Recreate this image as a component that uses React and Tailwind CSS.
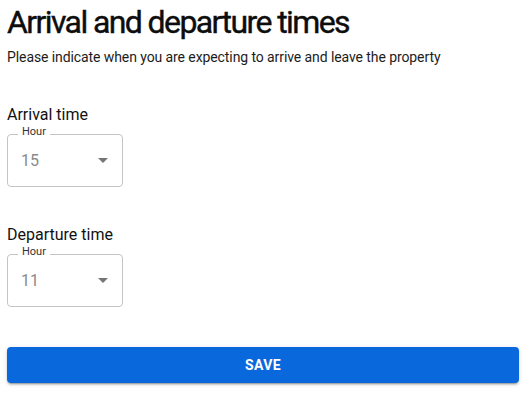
import React from "react";

function HourSelect({ value }) {
  return (
    <div className="relative mt-[7px] flex h-[53px] w-[116px] items-center rounded-[4px] border border-[#c4c4c4] pl-[13px]">
      <span className="absolute left-[10px] top-[-9px] bg-white px-[4px] text-[11px] leading-[12px] text-[#333]">
        Hour
      </span>
      <span className="text-[16px] leading-[24px] text-[#8a8a8a]">{value}</span>
      <svg
        className="absolute right-[7px] top-[13px]"
        width="24"
        height="24"
        viewBox="0 0 24 24"
        fill="#757575"
      >
        <path d="M7 10l5 5 5-5z" />
      </svg>
    </div>
  );
}

export default function App() {
  return (
    <div
      className="min-h-[406px] bg-white px-[7px] text-[#111]"
      style={{ fontFamily: "Roboto, 'Liberation Sans', sans-serif" }}
    >
      <h1 className="pt-[3px] text-[32px] font-normal leading-[38px] tracking-[-1.6px] text-[#0d0d0d] [-webkit-text-stroke:0.4px_#0d0d0d]">
        Arrival and departure times
      </h1>
      <p className="mt-[6px] text-[14px] leading-[20px] tracking-[-0.09px] text-[#1c1c1c]">
        Please indicate when you are expecting to arrive and leave the property
      </p>
      <h2 className="mt-[36px] text-[16px] font-normal leading-[24px] text-[#111]">Arrival time</h2>
      <HourSelect value="15" />
      <h2 className="mt-[36px] text-[16px] font-normal leading-[24px] text-[#111]">Departure time</h2>
      <HourSelect value="11" />
      <button className="mt-[40px] flex h-[36px] w-full items-center justify-center rounded-[4px] bg-[#0868dc] text-[14px] font-bold uppercase tracking-[0.4px] text-white shadow-[0_3px_1px_-2px_rgba(0,0,0,0.2),0_2px_2px_0_rgba(0,0,0,0.14),0_1px_5px_0_rgba(0,0,0,0.12)]">
        Save
      </button>
    </div>
  );
}
